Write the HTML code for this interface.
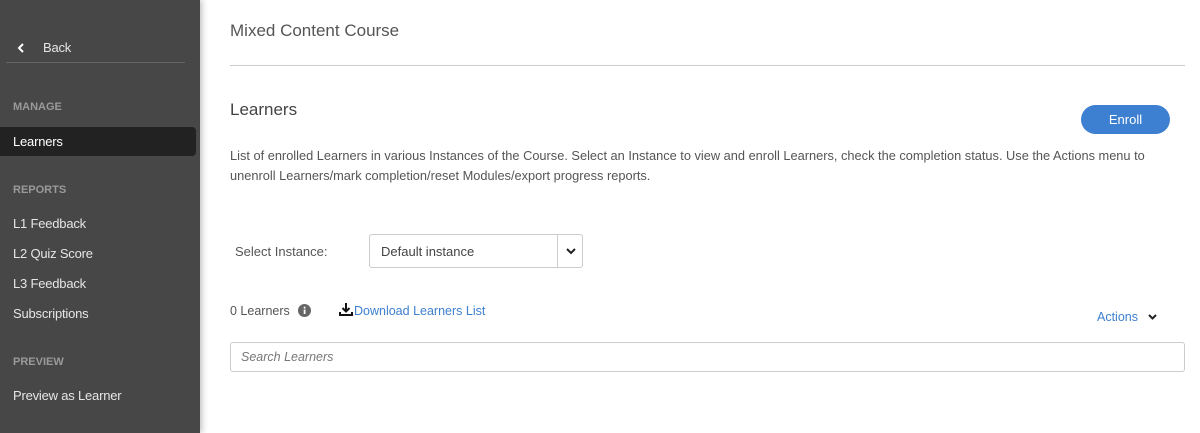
<!DOCTYPE html>
<html><head><meta charset="utf-8"><style>
*{margin:0;padding:0;box-sizing:border-box}
body{width:1200px;height:433px;overflow:hidden;background:#fff;font-family:"Liberation Sans",sans-serif;position:relative;color:#4a4a4a}
.sb{position:absolute;left:0;top:0;width:200px;height:433px;background:#474747;box-shadow:2px 0 6px rgba(0,0,0,.25)}
.sb div{position:absolute;left:13px;color:#e6e6e6;font-size:13px;letter-spacing:-.2px}
.sb .h{color:#9a9a9a;font-size:11px;font-weight:bold;letter-spacing:0}
.act{position:absolute;left:0;top:127px;width:196px;height:29px;background:#222;border-radius:0 4px 4px 0}
.t{position:absolute;white-space:nowrap}
</style></head><body>
<div class="sb">
<svg style="position:absolute;left:17px;top:43px" width="8" height="10" viewBox="0 0 8 10"><path d="M6 1L2 5l4 4" stroke="#fff" stroke-width="2" fill="none"/></svg>
<div style="top:40px;left:43px">Back</div>
<div style="top:62px;left:6px;width:179px;height:1px;background:#666"></div>
<div class="h" style="top:101px">MANAGE</div>
<div class="act" style="left:0"></div>
<div style="top:134px;color:#fff">Learners</div>
<div class="h" style="top:184px">REPORTS</div>
<div style="top:216px">L1 Feedback</div>
<div style="top:246px">L2 Quiz Score</div>
<div style="top:276px">L3 Feedback</div>
<div style="top:306px">Subscriptions</div>
<div class="h" style="top:356px">PREVIEW</div>
<div style="top:388px">Preview as Learner</div>
</div>
<div class="t" style="left:230px;top:21px;font-size:17px;color:#555">Mixed Content Course</div>
<div style="position:absolute;left:230px;top:65px;width:955px;height:1px;background:#ccc"></div>
<div class="t" style="left:230px;top:100px;font-size:17px;color:#444">Learners</div>
<div style="position:absolute;left:1081px;top:105px;width:89px;height:29px;background:#3d7fd0;border-radius:15px;color:#fff;font-size:13px;text-align:center;line-height:29px">Enroll</div>
<div style="position:absolute;left:230px;top:146px;width:958px;font-size:12.8px;line-height:20px;color:#555">List of enrolled Learners in various Instances of the Course. Select an Instance to view and enroll Learners, check the completion status. Use the Actions menu to unenroll Learners/mark completion/reset Modules/export progress reports.</div>
<div class="t" style="left:235px;top:244px;font-size:13px;color:#555">Select Instance:</div>
<div style="position:absolute;left:369px;top:234px;width:214px;height:34px;border:1px solid #ccc;border-radius:3px">
<div class="t" style="left:11px;top:9px;font-size:13px;color:#444">Default instance</div>
<div style="position:absolute;left:187px;top:0;width:1px;height:32px;background:#ccc"></div>
<svg style="position:absolute;left:195px;top:12px" width="12" height="9" viewBox="0 0 12 9"><path d="M2 2l4 4 4-4" stroke="#222" stroke-width="2" fill="none"/></svg>
</div>
<div class="t" style="left:230px;top:304px;font-size:12.5px;color:#555">0 Learners</div>
<svg style="position:absolute;left:298px;top:304px" width="13" height="13"><circle cx="6.5" cy="6.5" r="6.5" fill="#666"/><rect x="5.7" y="5.5" width="1.8" height="4.5" fill="#fff"/><circle cx="6.6" cy="3.6" r="1" fill="#fff"/></svg>
<svg style="position:absolute;left:338px;top:303px" width="16" height="14" viewBox="0 0 16 14"><path d="M8 0v8M4.5 5l3.5 3.5 3.5-3.5" stroke="#111" stroke-width="2" fill="none"/><path d="M1 9v4h14V9h-2v2H3V9z" fill="#111"/></svg>
<div class="t" style="left:354px;top:304px;font-size:12.5px;color:#3d7fd0">Download Learners List</div>
<div class="t" style="left:1097px;top:310px;font-size:12.5px;color:#3d7fd0">Actions</div>
<svg style="position:absolute;left:1147px;top:313px" width="11" height="8" viewBox="0 0 11 8"><path d="M2 2l3.5 3.5L9 2" stroke="#222" stroke-width="2" fill="none"/></svg>
<div style="position:absolute;left:230px;top:342px;width:955px;height:30px;border:1px solid #ccc;border-radius:3px">
<div class="t" style="left:10px;top:7px;font-size:12.5px;font-style:italic;color:#777">Search Learners</div>
</div>
</body></html>
